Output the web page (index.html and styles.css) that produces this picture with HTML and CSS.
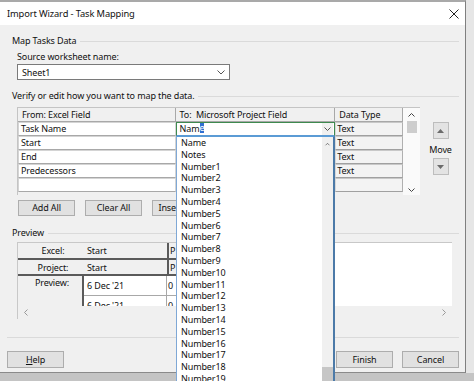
FILE: index.html
```html
<!DOCTYPE html>
<html>
<head>
<meta charset="utf-8">
<link rel="stylesheet" href="styles.css">
</head>
<body>
<div class="screen">
  <div class="dialog">
    <div class="titlebar">
      <span class="title">Import Wizard - Task Mapping</span>
      <svg class="close" width="10" height="10" viewBox="0 0 10 10"><path d="M0.5 0.5L9.5 9.5M9.5 0.5L0.5 9.5" stroke="#222" stroke-width="1"/></svg>
    </div>
    <div class="body">
      <div class="group-head"><span>Map Tasks Data</span><i></i></div>
      <div class="field-label">Source worksheet name:</div>
      <div class="select"><span>Sheet1</span>
        <svg width="8" height="5" viewBox="0 0 8 5"><path d="M0.5 0.5L4 4L7.5 0.5" fill="none" stroke="#555" stroke-width="1"/></svg>
      </div>
      <div class="group-head sub"><span>Verify or edit how you want to map the data.</span><i></i></div>
      <div class="map-row">
        <div class="grid">
          <div class="cols">
            <div class="col c1">
              <div class="hcell">From: Excel Field</div>
              <div class="cell">Task Name</div>
              <div class="cell">Start</div>
              <div class="cell">End</div>
              <div class="cell">Predecessors</div>
              <div class="cell"></div>
            </div>
            <div class="col c2">
              <div class="hcell">To:&nbsp; Microsoft Project Field</div>
              <div class="cell edit"><span class="etext">Nam<b class="sel">e</b></span>
                <span class="ddbtn"><svg width="7" height="4" viewBox="0 0 7 4"><path d="M0.5 0.5L3.5 3.5L6.5 0.5" fill="none" stroke="#555" stroke-width="1"/></svg></span>
              </div>
              <div class="cell"></div>
              <div class="cell"></div>
              <div class="cell"></div>
              <div class="cell"></div>
            </div>
            <div class="col c3">
              <div class="hcell">Data Type</div>
              <div class="cell dt">Text</div>
              <div class="cell dt">Text</div>
              <div class="cell dt">Text</div>
              <div class="cell dt">Text</div>
              <div class="cell dt"></div>
            </div>
            <div class="vscroll">
              <svg class="arr" width="7" height="4" viewBox="0 0 7 4"><path d="M0.5 3.5L3.5 0.5L6.5 3.5" fill="none" stroke="#444" stroke-width="1"/></svg>
              <div class="thumb"></div>
              <div class="spacer"></div>
              <svg class="arr" width="7" height="4" viewBox="0 0 7 4"><path d="M0.5 0.5L3.5 3.5L6.5 0.5" fill="none" stroke="#444" stroke-width="1"/></svg>
            </div>
          </div>
        </div>
        <div class="move">
          <div class="mbtn"><svg width="7" height="4" viewBox="0 0 7 4"><path d="M0 4L3.5 0L7 4Z" fill="#6b6b6b"/></svg></div>
          <div class="mlabel">Move</div>
          <div class="mbtn"><svg width="7" height="4" viewBox="0 0 7 4"><path d="M0 0L3.5 4L7 0Z" fill="#6b6b6b"/></svg></div>
        </div>
      </div>
      <div class="btn-row">
        <div class="btn">Add All</div>
        <div class="btn">Clear All</div>
        <div class="btn">Insert Row</div>
        <div class="btn">Delete Row</div>
      </div>
      <div class="group-head prev"><span>Preview</span><i></i></div>
      <div class="preview">
        <div class="pv-body">
          <div class="pv-row hdr">
            <div class="pl">Excel:</div><div class="pc">Start</div><div class="pc3">P</div>
          </div>
          <div class="pv-row hdr proj">
            <div class="pl">Project:</div><div class="pc">Start</div><div class="pc3">P</div>
          </div>
          <div class="pv-data">
            <div class="pl">Preview:</div>
            <div class="pv-cells">
              <div class="drow"><div class="pc">6 Dec '21</div><div class="pc3">0</div></div>
              <div class="drow"><div class="pc">6 Dec '21</div><div class="pc3">0</div></div>
            </div>
          </div>
        </div>
        <div class="hscroll">
          <svg width="4" height="7" viewBox="0 0 4 7"><path d="M3.5 0.5L0.5 3.5L3.5 6.5" fill="none" stroke="#999" stroke-width="1"/></svg>
          <svg width="4" height="7" viewBox="0 0 4 7"><path d="M0.5 0.5L3.5 3.5L0.5 6.5" fill="none" stroke="#999" stroke-width="1"/></svg>
        </div>
      </div>
      <div class="sep"></div>
      <div class="footer">
        <div class="btn"><u>H</u>elp</div>
        <div class="right">
          <div class="btn">Finish</div>
          <div class="btn">Cancel</div>
        </div>
      </div>
    </div>
  </div>
  <div class="dropdown">
    <ul class="items">
      <li>Name</li><li>Notes</li><li>Number1</li><li>Number2</li><li>Number3</li><li>Number4</li><li>Number5</li><li>Number6</li><li>Number7</li><li>Number8</li><li>Number9</li><li>Number10</li><li>Number11</li><li>Number12</li><li>Number13</li><li>Number14</li><li>Number15</li><li>Number16</li><li>Number17</li><li>Number18</li><li>Number19</li><li>Number20</li>
    </ul>
    <div class="lscroll">
      <svg class="arr" width="7" height="4" viewBox="0 0 7 4"><path d="M0.5 3.5L3.5 0.5L6.5 3.5" fill="none" stroke="#444" stroke-width="1"/></svg>
      <div class="lthumb"></div>
    </div>
  </div>
</div>
</body>
</html>
```

FILE: styles.css
```css
* { box-sizing: border-box; }
html, body { margin: 0; padding: 0; }
body {
  font-family: "Noto Sans", "Open Sans", sans-serif;
  font-size: 9px;
  letter-spacing: -0.12px;
  color: #111;
  background: #dcdcdc;
}
.screen {
  position: relative;
  width: 474px;
  height: 381px;
  overflow: hidden;
  background: linear-gradient(to bottom, #e6e6e6 373px, #c4c4c4 373px);
}
.dialog {
  width: 466px;
  height: 373px;
  background: #f0f0f0;
  border-top: 2px solid #a9a9a9;
  border-right: 1px solid #7f7f7f;
  border-bottom: 1px solid #8a8a8a;
}
.titlebar {
  height: 23px;
  background: #fff;
  display: flex;
  align-items: center;
  justify-content: space-between;
  padding: 0 6px 0 7px;
}
.title { font-size: 9.3px; line-height: 12px; }
.body { padding: 10px 6px 0 12px; }
.group-head {
  display: flex;
  align-items: center;
  height: 12px;
  line-height: 12px;
}
.group-head i {
  flex: 1;
  border-top: 1px solid #dadada;
  margin-left: 4px;
}
.field-label { margin: 4px 0 0 5px; line-height: 12px; }
.select {
  margin: 1px 0 0 5px;
  width: 213px;
  height: 16px;
  background: #fff;
  border: 1px solid #7a7a7a;
  display: flex;
  align-items: center;
  justify-content: space-between;
  padding: 0 4px 0 4px;
}
.group-head.sub { margin-top: 10px; }
.map-row {
  display: flex;
  margin: 5px 0 0 5px;
}
.grid {
  width: 403px;
  height: 88px;
  background: #f0f0f0;
  border-top: 1px solid #c4c4c4;
  border-left: 1px solid #c4c4c4;
}
.cols { display: flex; }
.col { display: flex; flex-direction: column; }
.c1 { width: 158px; }
.c2 { width: 160px; }
.c3 { width: 68px; }
.hcell {
  height: 14px;
  line-height: 13px;
  padding-left: 4px;
  border-right: 1px solid #a8a8a8;
  border-bottom: 1px solid #a8a8a8;
  background: #f0f0f0;
  white-space: nowrap;
  overflow: hidden;
}
.cell {
  height: 14px;
  line-height: 12px;
  padding-left: 2px;
  background: #fff;
  border: 1px solid #d4d4d4;
  border-bottom-color: #a8a8a8;
  white-space: nowrap;
}
.cell.dt {
  background: #f3f3f3;
  border-color: #c8c8c8 #b0b0b0 #a0a0a0 #d8d8d8;
  padding-left: 1px;
}
.cell.edit {
  border: 1px solid #3e8a4f;
  border-bottom-color: #5b9bd5;
  display: flex;
  justify-content: space-between;
  align-items: center;
  padding: 0 1px 0 3px;
}
.etext { line-height: 12px; }
.sel {
  font-weight: normal;
  background: #2f6fd1;
  color: #fff;
  display: inline-block;
  width: 4px;
  overflow: hidden;
  line-height: 10px;
  vertical-align: -1px;
}
.ddbtn {
  width: 11px;
  height: 12px;
  display: flex;
  align-items: center;
  justify-content: center;
  background: #f0f0f0;
}
.vscroll {
  width: 17px;
  height: 87px;
  background: #fafafa;
  display: flex;
  flex-direction: column;
  align-items: center;
  padding: 5px 0 3px;
}
.thumb {
  width: 10px;
  height: 12px;
  background: #cdcdcd;
  margin-top: 4px;
}
.spacer { flex: 1; }
.move {
  width: 17px;
  margin-left: 12px;
  padding-top: 15px;
  display: flex;
  flex-direction: column;
  align-items: center;
}
.mbtn {
  width: 16px;
  height: 17px;
  background: #e3e3e3;
  border: 1px solid #bdbdbd;
  display: flex;
  align-items: center;
  justify-content: center;
}
.mlabel {
  height: 19px;
  line-height: 21px;
  text-align: center;
  width: 30px;
}
.btn-row {
  display: flex;
  gap: 10px;
  margin: 5px 0 0 6px;
}
.btn {
  width: 57px;
  height: 16px;
  line-height: 14px;
  text-align: center;
  background: #e1e1e1;
  border: 1px solid #adadad;
  white-space: nowrap;
}
.group-head.prev { margin-top: 11px; }
.preview {
  margin: 3px 0 0 5px;
  width: 435px;
  height: 77px;
  background: #fff;
  border-left: 1px solid #c8c8c8;
  border-top: 1px solid #c8c8c8;
  display: flex;
  flex-direction: column;
}
.pv-body { height: 63px; overflow: hidden; }
.pv-row { display: flex; height: 17px; }
.pv-row.hdr .pl, .pv-row.hdr .pc, .pv-row.hdr .pc3 { background: #f0f0f0; }
.pl {
  width: 66px;
  text-align: center;
  line-height: 15px;
  padding-left: 4px;
}
.pc {
  width: 85px;
  padding-left: 3px;
  line-height: 15px;
  border-right: 2px solid #5a5a5a;
}
.pc3 { width: 80px; padding-left: 1px; line-height: 15px; white-space: nowrap; overflow: hidden; }
.pv-row.hdr { border-bottom: 2px solid #5a5a5a; width: 231px; }
.pv-row.proj { height: 16px; }
.pv-data { display: flex; }
.pv-data .pl {
  background: #f0f0f0;
  border-top: 2px solid #5a5a5a;
  border-right: 2px solid #5a5a5a;
  height: 40px;
  line-height: 11px;
  padding-top: 1px;
  margin-top: -2px;
}
.pv-cells { display: flex; flex-direction: column; }
.drow { display: flex; height: 20px; border-bottom: 1px solid #a8a8a8; }
.drow .pc { border-right: 1px solid #a8a8a8; width: 83px; line-height: 20px; padding-left: 3px; }
.drow .pc3 { line-height: 20px; }
.hscroll {
  height: 13px;
  background: #f0f0f0;
  display: flex;
  align-items: center;
  justify-content: space-between;
  padding: 0 6px 0 6px;
}
.sep {
  margin: 18px 0 0 -5px;
  border-top: 1px solid #dadada;
}
.footer {
  display: flex;
  justify-content: space-between;
  margin: 13px 0 0 -5px;
}
.footer .btn { height: 17px; line-height: 15px; width: 57px; }
.footer .right { display: flex; gap: 9px; }
.dropdown {
  position: absolute;
  left: 176px;
  top: 136px;
  width: 159px;
  height: 250px;
  background: #fff;
  border-left: 1px solid #7fa8d6;
  border-right: 2px solid #4c7aa8;
  border-top: 1px solid #5b9bd5;
  display: flex;
}
.items {
  list-style: none;
  margin: 0;
  padding: 0 0 0 4px;
  flex: 1;
}
.items li { line-height: 11.8px; height: 11.8px; white-space: nowrap; }
.lscroll {
  width: 11px;
  background: #f0f0f0;
  display: flex;
  flex-direction: column;
  align-items: center;
  padding-top: 6px;
}
.lthumb {
  width: 11px;
  height: 30px;
  margin-top: 221px;
  background: #c6c6c6;
}
```
